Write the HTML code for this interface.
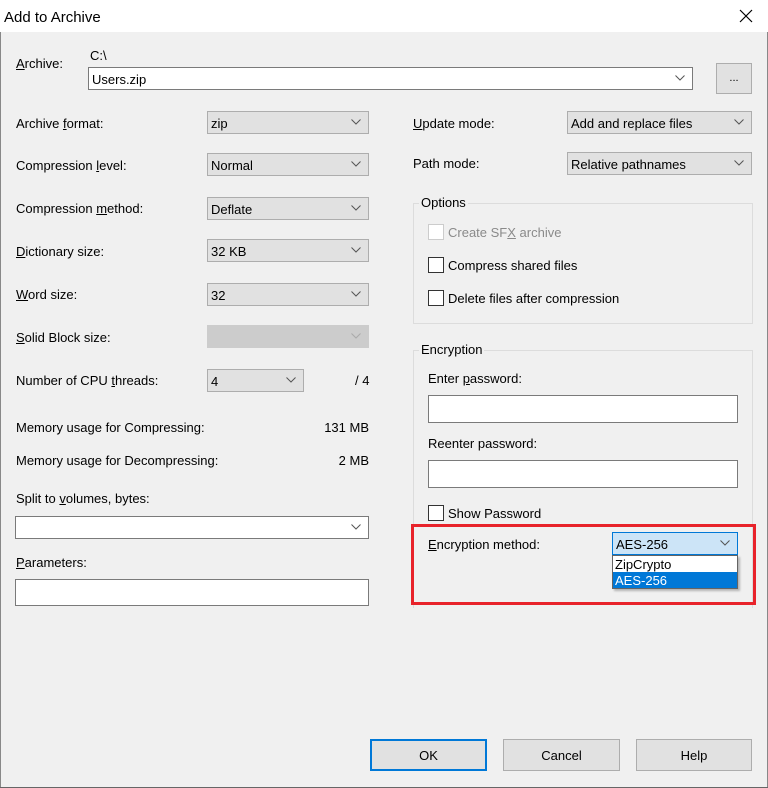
<!DOCTYPE html><html><head><style>
*{box-sizing:border-box}
body{margin:0;width:768px;height:788px;background:#f0f0f0;font-family:"Liberation Sans",sans-serif;font-size:13px;color:#000;position:relative;overflow:hidden}
.a{position:absolute;white-space:nowrap}
.t{position:absolute;white-space:nowrap;line-height:16px;margin-top:1px}
.cb{position:absolute;height:23px;background:#e1e1e1;border:1px solid #adadad;padding:3px 3px 1px;line-height:17px}
.cb svg,.in svg{position:absolute;right:7px;top:7px}
.in{position:absolute;background:#fff;border:1px solid #7a7a7a;padding:3px 3px;line-height:17px}
.chk{position:absolute;width:16px;height:16px;border:1px solid #333;background:#fff}
.btn{position:absolute;height:32px;background:#e1e1e1;border:1px solid #adadad;text-align:center;line-height:31px}
.grp{position:absolute;border:1px solid #dcdcdc}
.gl{position:absolute;background:#f0f0f0;padding:0 2px;line-height:16px;margin-top:1px}
u{text-decoration:underline}
</style></head><body>
<div class="a" style="left:0;top:0;width:768px;height:32px;background:#fff"></div>
<div class="t" style="left:4px;top:8px;font-size:15px;line-height:18px">Add to Archive</div>
<svg class="a" style="left:739px;top:9px" width="14" height="14"><path d="M1 1L13 13M13 1L1 13" stroke="#000" stroke-width="1.2"/></svg>
<div class="a" style="left:0;top:32px;width:1px;height:756px;background:#888"></div>
<div class="a" style="left:767px;top:32px;width:1px;height:756px;background:#888"></div>
<div class="a" style="left:0;top:787px;width:768px;height:1px;background:#666"></div>

<div class="t" style="left:16px;top:55px"><u>A</u>rchive:</div>
<div class="t" style="left:90px;top:47px">C:\</div>
<div class="in" style="left:88px;top:67px;width:605px;height:23px;padding:3px 3px 1px">Users.zip<svg width="10" height="6"><path d="M0.5 0.5L5 5L9.5 0.5" stroke="#555" fill="none"/></svg></div>
<div class="btn" style="left:716px;top:63px;width:36px;height:31px;font-size:11px;line-height:29px">...</div>

<div class="t" style="left:16px;top:115px">Archive <u>f</u>ormat:</div>
<div class="t" style="left:16px;top:157px">Compression <u>l</u>evel:</div>
<div class="t" style="left:16px;top:200px">Compression <u>m</u>ethod:</div>
<div class="t" style="left:16px;top:243px"><u>D</u>ictionary size:</div>
<div class="t" style="left:16px;top:286px"><u>W</u>ord size:</div>
<div class="t" style="left:16px;top:329px"><u>S</u>olid Block size:</div>
<div class="t" style="left:16px;top:372px">Number of CPU <u>t</u>hreads:</div>
<div class="t" style="left:16px;top:419px">Memory usage for Compressing:</div>
<div class="t" style="left:16px;top:452px">Memory usage for Decompressing:</div>
<div class="t" style="left:16px;top:490px">Split to <u>v</u>olumes, bytes:</div>
<div class="t" style="left:16px;top:554px"><u>P</u>arameters:</div>

<div class="cb" style="left:207px;top:111px;width:162px">zip<svg width="10" height="6"><path d="M0.5 0.5L5 5L9.5 0.5" stroke="#555" fill="none"/></svg></div>
<div class="cb" style="left:207px;top:153px;width:162px">Normal<svg width="10" height="6"><path d="M0.5 0.5L5 5L9.5 0.5" stroke="#555" fill="none"/></svg></div>
<div class="cb" style="left:207px;top:197px;width:162px">Deflate<svg width="10" height="6"><path d="M0.5 0.5L5 5L9.5 0.5" stroke="#555" fill="none"/></svg></div>
<div class="cb" style="left:207px;top:239px;width:162px">32 KB<svg width="10" height="6"><path d="M0.5 0.5L5 5L9.5 0.5" stroke="#555" fill="none"/></svg></div>
<div class="cb" style="left:207px;top:283px;width:162px">32<svg width="10" height="6"><path d="M0.5 0.5L5 5L9.5 0.5" stroke="#555" fill="none"/></svg></div>
<div class="cb" style="left:207px;top:325px;width:162px;background:#ccc;border-color:#ccc"><svg width="10" height="6"><path d="M0.5 0.5L5 5L9.5 0.5" stroke="#aaa" fill="none"/></svg></div>
<div class="cb" style="left:207px;top:369px;width:97px">4<svg width="10" height="6"><path d="M0.5 0.5L5 5L9.5 0.5" stroke="#555" fill="none"/></svg></div>
<div class="t" style="left:355px;top:372px">/ 4</div>
<div class="t" style="left:300px;top:419px;width:69px;text-align:right">131 MB</div>
<div class="t" style="left:300px;top:452px;width:69px;text-align:right">2 MB</div>
<div class="in" style="left:15px;top:516px;width:354px;height:23px;padding:2px"><svg width="10" height="6"><path d="M0.5 0.5L5 5L9.5 0.5" stroke="#555" fill="none"/></svg></div>
<div class="in" style="left:15px;top:579px;width:354px;height:27px"></div>

<div class="t" style="left:413px;top:115px"><u>U</u>pdate mode:</div>
<div class="t" style="left:413px;top:155px">Path mode:</div>
<div class="cb" style="left:567px;top:111px;width:185px">Add and replace files<svg width="10" height="6"><path d="M0.5 0.5L5 5L9.5 0.5" stroke="#555" fill="none"/></svg></div>
<div class="cb" style="left:567px;top:152px;width:185px">Relative pathnames<svg width="10" height="6"><path d="M0.5 0.5L5 5L9.5 0.5" stroke="#555" fill="none"/></svg></div>

<div class="grp" style="left:413px;top:203px;width:340px;height:121px"></div>
<div class="gl" style="left:419px;top:194px">Options</div>
<div class="chk" style="left:428px;top:224px;border-color:#ccc"></div>
<div class="t" style="left:448px;top:224px;color:#8a8a8a">Create SF<u>X</u> archive</div>
<div class="chk" style="left:428px;top:257px"></div>
<div class="t" style="left:448px;top:257px">Compress shared files</div>
<div class="chk" style="left:428px;top:290px"></div>
<div class="t" style="left:448px;top:290px">Delete files after compression</div>

<div class="grp" style="left:413px;top:350px;width:340px;height:258px;border-bottom:none"></div>
<div class="gl" style="left:419px;top:341px">Encryption</div>
<div class="t" style="left:428px;top:370px">Enter <u>p</u>assword:</div>
<div class="in" style="left:428px;top:395px;width:310px;height:28px"></div>
<div class="t" style="left:428px;top:435px">Reenter password:</div>
<div class="in" style="left:428px;top:460px;width:310px;height:28px"></div>
<div class="chk" style="left:428px;top:505px"></div>
<div class="t" style="left:448px;top:505px">Show Password</div>
<div class="a" style="left:411px;top:524px;width:345px;height:81px;border:3px solid #e8232b"></div>
<div class="t" style="left:428px;top:536px"><u>E</u>ncryption method:</div>
<div class="cb" style="left:612px;top:532px;width:126px;background:#cce4f7;border-color:#0078d7">AES-256<svg width="10" height="6"><path d="M0.5 0.5L5 5L9.5 0.5" stroke="#555" fill="none"/></svg></div>
<div class="a" style="left:612px;top:555px;width:126px;height:34px;background:#fff;border:1px solid #646464;box-shadow:2px 2px 2px rgba(0,0,0,.25)"></div>
<div class="t" style="left:615px;top:556px">ZipCrypto</div>
<div class="a" style="left:613px;top:572px;width:124px;height:16px;background:#0078d7"></div>
<div class="t" style="left:615px;top:572px;color:#fff">AES-256</div>

<div class="btn" style="left:370px;top:739px;width:117px;border:1px solid #0078d7;box-shadow:inset 0 0 0 1px #0078d7">OK</div>
<div class="btn" style="left:503px;top:739px;width:117px">Cancel</div>
<div class="btn" style="left:636px;top:739px;width:116px">Help</div>
</body></html>
